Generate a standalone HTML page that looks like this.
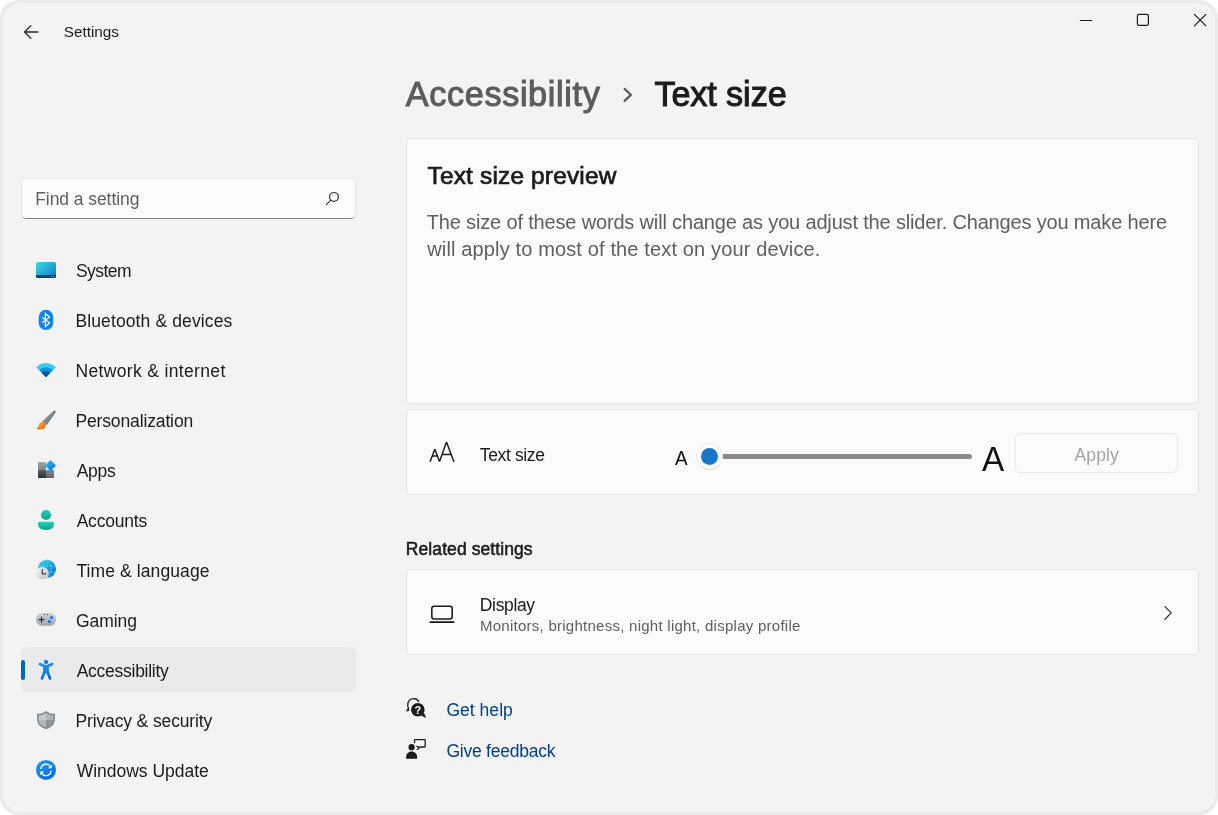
<!DOCTYPE html>
<html lang="en"><head><meta charset="utf-8"><title>Settings</title>
<style>
html,body{margin:0;padding:0;background:#fff;}
body{width:1218px;height:815px;overflow:hidden;position:relative;font-family:"Liberation Sans",sans-serif;}
.win{position:absolute;left:0;top:0;width:1218px;height:815px;border-radius:19px;background:#ebe9e9;}
.win i{position:absolute;display:block;left:3px;top:3px;right:3px;bottom:3px;border-radius:17.5px;background:#f3f3f3;}
.txt{position:absolute;left:0;top:0;width:1218px;height:815px;will-change:transform;}
.t{position:absolute;display:block;white-space:nowrap;line-height:1;margin:0;padding:0;font-weight:400;text-decoration:none;}
.card{position:absolute;left:406px;width:793px;box-sizing:border-box;background:#fbfbfb;border:1px solid #e5e5e5;border-radius:5px;}
.search{position:absolute;left:21px;top:178px;width:335px;height:41px;box-sizing:border-box;background:#fbfbfb;border:1px solid #e7e7e7;border-bottom:1px solid #868686;border-radius:5px;}
.sel{position:absolute;left:21px;top:647px;width:335px;height:45px;background:#eaeaea;border-radius:5px;}
.pill{position:absolute;left:21px;top:660px;width:4px;height:20px;border-radius:2px;background:#0067c0;}
.btn{position:absolute;left:1015px;top:433px;width:163px;height:40px;box-sizing:border-box;background:#fbfbfb;border:1px solid #e9e9e9;border-radius:5px;}
.track{position:absolute;left:709px;top:454px;width:263px;height:5px;border-radius:2.5px;background:#8a8a8a;}
.thumb{position:absolute;left:696px;top:443.3px;width:27px;height:27px;box-sizing:border-box;border-radius:50%;background:#fff;border:1px solid #eaeaea;border-bottom-color:#dedede;}
.thumb i{position:absolute;left:3.9px;top:3.8px;width:17.2px;height:17.2px;border-radius:50%;background:#1975c5;display:block;}
svg.ic{position:absolute;left:0;top:0;width:1218px;height:815px;overflow:visible;will-change:transform;}
</style></head>
<body>
<div class="win"><i></i></div>
<div class="search"></div>
<div class="sel"></div><div class="pill"></div>
<div class="card" style="top:138px;height:266px;"></div>
<div class="card" style="top:409px;height:86px;"></div>
<div class="card" style="top:569px;height:86px;"></div>
<div class="btn"></div>
<div class="track"></div>
<div class="thumb"><i></i></div>
<svg class="ic" viewBox="0 0 1218 815" width="1218" height="815">
<defs>
<linearGradient id="gSys" x1="0" y1="0" x2="1" y2="1"><stop offset="0" stop-color="#38e0e2"/><stop offset="1" stop-color="#1272c8"/></linearGradient>
<linearGradient id="gBrH" x1="0" y1="0" x2="1" y2="1"><stop offset="0" stop-color="#a3a9af"/><stop offset="1" stop-color="#5b636a"/></linearGradient>
<linearGradient id="gBrT" x1="0" y1="0" x2="1" y2="1"><stop offset="0" stop-color="#ffbe2e"/><stop offset="1" stop-color="#ee5a0c"/></linearGradient>
<linearGradient id="gDia" x1="0" y1="0" x2="1" y2="1"><stop offset="0" stop-color="#2fc0f8"/><stop offset="1" stop-color="#0a70da"/></linearGradient>
<linearGradient id="gAcc" x1="0" y1="0" x2="0" y2="1"><stop offset="0" stop-color="#27cfb8"/><stop offset="1" stop-color="#0ea48e"/></linearGradient>
<linearGradient id="gGlobe" x1="0" y1="0" x2="1" y2="1"><stop offset="0" stop-color="#2fd8e2"/><stop offset="1" stop-color="#0a5cc8"/></linearGradient>
<linearGradient id="gClock" x1="0" y1="0" x2="1" y2="1"><stop offset="0" stop-color="#fafafa"/><stop offset="1" stop-color="#bdbdbd"/></linearGradient>
<linearGradient id="gPad" x1="0" y1="0" x2="0" y2="1"><stop offset="0" stop-color="#cfd3d8"/><stop offset="1" stop-color="#9ea3aa"/></linearGradient>
<linearGradient id="gBlue" x1="0" y1="0" x2="0.6" y2="1"><stop offset="0" stop-color="#20a0ec"/><stop offset="1" stop-color="#0a6edb"/></linearGradient>
<linearGradient id="gAp1" x1="0" y1="0" x2="0" y2="1"><stop offset="0" stop-color="#a2a7ae"/><stop offset="1" stop-color="#80858c"/></linearGradient>
<linearGradient id="gAp2" x1="0" y1="0" x2="0" y2="1"><stop offset="0" stop-color="#5a5e63"/><stop offset="1" stop-color="#2d3034"/></linearGradient>
<linearGradient id="gAp3" x1="0" y1="0" x2="0" y2="1"><stop offset="0" stop-color="#868b92"/><stop offset="1" stop-color="#5f6368"/></linearGradient>
<clipPath id="cSys"><rect x="36" y="262" width="20" height="16" rx="1.8"/></clipPath>
<clipPath id="cSh"><path d="M46 712.9C48.3 714.6 50.8 715.3 53.4 715.4V719.6C53.4 723.6 50.2 726 46 727.5C41.800 726 38.600 723.600 38.600 719.600V715.400C41.200 715.300 43.700 714.600 46 712.900Z"/></clipPath>
</defs>
<!-- title bar -->
<g fill="none" stroke="#2b2b2b" stroke-width="1.3" stroke-linecap="round" stroke-linejoin="round">
<path d="M37.900 32H24.700M30.800 25.800L24.500 32L30.800 38.200"/>
</g>
<g fill="none" stroke="#1b1b1b" stroke-width="1.2" stroke-linecap="round">
<path d="M1080.300 20.500H1091.800"/>
<rect x="1137.400" y="14.400" width="11" height="11" rx="1.700"/>
<path d="M1194.400 14.400L1205.900 25.900M1205.900 14.400L1194.400 25.900"/>
</g>
<!-- search icon -->
<g fill="none" stroke="#333" stroke-width="1.2" stroke-linecap="round">
<circle cx="334" cy="196.900" r="4.400"/><path d="M330.800 200.100L326.300 204.600"/>
</g>
<!-- system -->
<g clip-path="url(#cSys)"><rect x="36" y="262" width="20" height="16" fill="url(#gSys)"/><rect x="36" y="275" width="20" height="3" fill="#08436c"/><rect x="51" y="276" width="1" height="1" fill="#9fd2e6" fill-opacity="0.800"/><rect x="53" y="276" width="1" height="1" fill="#9fd2e6" fill-opacity="0.800"/></g>
<!-- bluetooth -->
<rect x="38.700" y="309.800" width="14.500" height="20.200" rx="7.250" fill="#0b84ee"/>
<path d="M42 317.200L49.500 322.800L45.400 326.600V313.400L49.500 317.200L42 322.800" fill="none" stroke="#fff" stroke-width="1.200" stroke-linejoin="miter"/>
<!-- wifi -->
<path d="M46 377L36.300 367.300A13.750 13.750 0 0 1 55.700 367.300Z" fill="#3ccaf5" stroke="#3ccaf5" stroke-width="0.500" stroke-linejoin="round"/>
<path d="M46 377L39.100 370.100A9.750 9.750 0 0 1 52.900 370.100Z" fill="#1490df"/>
<path d="M46 377L41.900 372.900A5.800 5.800 0 0 1 50.100 372.900Z" fill="#0c59a4" stroke="#0c59a4" stroke-width="0.500" stroke-linejoin="round"/>
<!-- brush -->
<path d="M53.400 410.900C54.400 409.700 56.400 411 55.700 412.400L46.600 425.200L42 421.600Z" fill="url(#gBrH)"/>
<path d="M41.600 421.900C43.800 421.300 46.300 423.300 45.700 426C45 429.200 40 430.100 36.100 428.700C38.400 427.600 38.800 426.200 39 424.600C39.200 423.100 40.200 422.300 41.600 421.900Z" fill="url(#gBrT)"/>
<!-- apps -->
<rect x="38" y="462" width="8" height="8" rx="0.600" fill="url(#gAp1)"/>
<rect x="38" y="470" width="8" height="8" rx="0.600" fill="url(#gAp2)"/>
<rect x="46" y="470" width="8" height="8" rx="0.600" fill="url(#gAp3)"/>
<path d="M50.500 460.300L55.800 465.600L50.500 470.900L45.200 465.600Z" fill="url(#gDia)" stroke="url(#gDia)" stroke-width="0.500" stroke-linejoin="round"/>
<!-- accounts -->
<circle cx="46" cy="515" r="5.050" fill="url(#gAcc)"/>
<path d="M39.600 521.800H52.400Q54.100 521.800 54.100 523.500C54.100 528 50.500 530 46 530C41.500 530 37.900 528 37.900 523.500Q37.900 521.800 39.600 521.800Z" fill="url(#gAcc)"/>
<!-- time & language -->
<circle cx="46.900" cy="568.900" r="9.100" fill="url(#gGlobe)"/>
<g fill="none" stroke="#4fe3ee" stroke-opacity="0.750" stroke-width="0.800">
<path d="M38.300 566H55.500M38.300 572H55.500M46.900 559.800V578"/><ellipse cx="46.900" cy="568.900" rx="4.300" ry="9.100"/>
</g>
<circle cx="42.200" cy="573.500" r="6.500" fill="#f3f3f3"/>
<circle cx="42.200" cy="573.500" r="6.100" fill="url(#gClock)"/>
<path d="M42.300 569.600V573.900H45.700" fill="none" stroke="#454545" stroke-width="1.300" stroke-linecap="round" stroke-linejoin="round"/>
<!-- gaming -->
<rect x="36" y="613" width="20" height="12.800" rx="6.400" fill="url(#gPad)"/>
<path d="M41.500 617.100V622.100M39 619.600H44" fill="none" stroke="#2e2e2e" stroke-width="1.200" stroke-linecap="round"/>
<circle cx="51.500" cy="617.500" r="1.600" fill="#0f7fe0"/><circle cx="49.400" cy="621.500" r="1.600" fill="#0f7fe0"/>
<circle cx="44.400" cy="614.600" r="0.550" fill="#333"/><circle cx="47.500" cy="614.600" r="0.550" fill="#333"/>
<!-- accessibility -->
<g fill="url(#gBlue)" stroke="none">
<circle cx="46" cy="661.900" r="2.150"/>
<path d="M38.600 663.400C39 662.700 39.700 662.500 40.300 662.800L44.200 664.600C45.300 665.100 46.700 665.100 47.800 664.600L51.700 662.800C52.300 662.500 53 662.700 53.400 663.400C53.700 664.100 53.400 664.900 52.700 665.200L48.900 667V671.500L51.300 678C51.600 678.800 51.200 679.500 50.500 679.800C49.800 680 49.100 679.700 48.800 679L46.300 672.900H45.700L43.200 679C42.900 679.700 42.200 680 41.500 679.800C40.800 679.500 40.400 678.800 40.700 678L43.100 671.500V667L39.300 665.200C38.600 664.900 38.300 664.100 38.600 663.400Z"/>
</g>
<!-- privacy -->
<path d="M46 711C48.800 713.100 51.800 713.800 55 713.800V719.600C55 724.800 51 727.700 46 729.300C41 727.700 37 724.800 37 719.600V713.800C40.200 713.800 43.200 713.100 46 711Z" fill="#8a8e94"/>
<g clip-path="url(#cSh)"><rect x="37" y="711" width="9" height="9" fill="#c6c9cd"/><rect x="46" y="711" width="9" height="9" fill="#b1b4b9"/><rect x="37" y="720" width="9" height="10" fill="#b1b4b9"/><rect x="46" y="720" width="9" height="10" fill="#8f9399"/></g>
<!-- update -->
<circle cx="46" cy="769.900" r="10" fill="url(#gBlue)"/>
<g fill="none" stroke="#fff" stroke-width="1.300" stroke-linecap="round">
<path d="M40.900 768.600A5.300 5.300 0 0 1 50.600 766.600"/><path d="M51.100 771.200A5.300 5.300 0 0 1 41.400 773.200"/>
</g>
<path d="M51.700 764.600V768.300H48Z" fill="#fff"/><path d="M40.300 775.200V771.500H44Z" fill="#fff"/>
<!-- heading chevron -->
<path d="M624.600 88.900L630.900 94.900L624.600 100.900" fill="none" stroke="#5c5c5c" stroke-width="2.200" stroke-linecap="round" stroke-linejoin="round"/>
<!-- AA icon -->
<path d="M430 461.800L434.900 449.300L439.550 461.500L446.500 442L453.900 461.800M432.200 456H437.500M442.200 454.500H451.200" fill="none" stroke="#1b1b1b" stroke-width="1.450" stroke-linejoin="bevel"/>
<!-- display icon -->
<g fill="none" stroke="#1b1b1b" stroke-width="1.550" stroke-linecap="round">
<rect x="431.800" y="606.200" width="20.400" height="12.800" rx="2.400"/><path d="M430.200 622.100H453.800"/>
</g>
<!-- card chevron -->
<path d="M1164.900 606.600L1171.300 612.900L1164.900 619.300" fill="none" stroke="#3a3a3a" stroke-width="1.300" stroke-linecap="round" stroke-linejoin="round"/>
<!-- get help -->
<circle cx="417.800" cy="709.800" r="6.800" fill="#1b1b1b"/>
<path d="M421 715.500L426.200 717.900L423.900 712.600Z" fill="#1b1b1b"/>
<path d="M418.700 701.500C416.600 697.400 409.600 697.300 407.900 703C407.300 705.400 407.900 707.300 408.700 709.300" fill="none" stroke="#1b1b1b" stroke-width="1.300" stroke-linecap="round"/>
<path d="M406 711.800L407.500 708.300L409.700 710.500Z" fill="#1b1b1b"/>
<text x="417.800" y="714.100" font-family="Liberation Sans, sans-serif" font-size="11" font-weight="700" fill="#fff" text-anchor="middle">?</text>
<!-- feedback -->
<circle cx="411.600" cy="747.200" r="3.100" fill="#1b1b1b"/>
<path d="M406.100 758.800V757C406.100 753.600 408.500 751.400 411.600 751.400C414.700 751.400 417.100 753.600 417.100 757V758.800Z" fill="#1b1b1b"/>
<path d="M414.500 742.500V740.400Q414.500 739.700 415.200 739.700H424.500Q425.200 739.700 425.200 740.400V746.300Q425.200 747 424.500 747H420L417.300 749.600M416.800 746.400L419.300 747.300" fill="none" stroke="#1b1b1b" stroke-width="1.300" stroke-linecap="round" stroke-linejoin="round"/>
</svg>

<div class="txt">
<div class="t" id="t_settings" style="left:63.85px;top:24.00px;font-size:15.30px;color:#1b1b1b;letter-spacing:-0.023px;">Settings</div>
<div class="t" id="t_find" style="left:35.20px;top:191.00px;font-size:17.50px;color:#5f5f5f;letter-spacing:-0.065px;">Find a setting</div>
<a class="t" id="t_h1" style="left:405.85px;top:77.00px;font-size:34.20px;color:#5c5c5c;letter-spacing:0.642px;-webkit-text-stroke:1.03px #5c5c5c;">Accessibility</a>
<h1 class="t" id="t_h2" style="left:654.40px;top:77.00px;font-size:34.20px;color:#1b1b1b;letter-spacing:-0.093px;-webkit-text-stroke:1.03px #1b1b1b;">Text size</h1>
<h2 class="t" id="t_prev" style="left:427.55px;top:164.00px;font-size:24.40px;color:#1b1b1b;letter-spacing:0.189px;-webkit-text-stroke:0.73px #1b1b1b;">Text size preview</h2>
<p class="t" id="t_p1" style="left:426.75px;top:212.00px;font-size:20.00px;color:#5f5f5f;letter-spacing:-0.164px;">The size of these words will change as you adjust the slider. Changes you make here</p>
<p class="t" id="t_p2" style="left:427.25px;top:239.00px;font-size:20.00px;color:#5f5f5f;letter-spacing:0.140px;">will apply to most of the text on your device.</p>
<div class="t" id="t_ts" style="left:479.85px;top:447.00px;font-size:17.50px;color:#1b1b1b;letter-spacing:-0.379px;">Text size</div>
<div class="t" id="t_a1" style="left:674.70px;top:448.00px;font-size:20.00px;color:#111111;letter-spacing:0.000px;transform:scaleX(0.9440);transform-origin:0 0;">A</div>
<div class="t" id="t_a2" style="left:981.80px;top:441.00px;font-size:35.00px;color:#111111;letter-spacing:0.000px;transform:scaleX(0.9533);transform-origin:0 0;">A</div>
<div class="t" id="t_apply" style="left:1074.55px;top:447.00px;font-size:17.50px;color:#a3a3a3;letter-spacing:0.087px;">Apply</div>
<h2 class="t" id="t_rel" style="left:405.80px;top:541.00px;font-size:17.50px;color:#1b1b1b;letter-spacing:0.088px;-webkit-text-stroke:0.53px #1b1b1b;">Related settings</h2>
<div class="t" id="t_disp" style="left:479.85px;top:597.00px;font-size:17.50px;color:#1b1b1b;letter-spacing:-0.361px;">Display</div>
<div class="t" id="t_mon" style="left:479.95px;top:618.00px;font-size:15.00px;color:#5f5f5f;letter-spacing:0.260px;">Monitors, brightness, night light, display profile</div>
<a class="t" id="t_help" style="left:446.45px;top:702.00px;font-size:17.50px;color:#003e92;letter-spacing:0.027px;">Get help</a>
<a class="t" id="t_fb" style="left:446.45px;top:743.00px;font-size:17.50px;color:#003e92;letter-spacing:-0.239px;">Give feedback</a>
<a class="t" id="t_nav0" style="left:75.90px;top:263.00px;font-size:17.50px;color:#1b1b1b;letter-spacing:-0.534px;">System</a>
<a class="t" id="t_nav1" style="left:75.40px;top:313.00px;font-size:17.50px;color:#1b1b1b;letter-spacing:0.122px;">Bluetooth &amp; devices</a>
<a class="t" id="t_nav2" style="left:75.40px;top:363.00px;font-size:17.50px;color:#1b1b1b;letter-spacing:0.349px;">Network &amp; internet</a>
<a class="t" id="t_nav3" style="left:75.40px;top:413.00px;font-size:17.50px;color:#1b1b1b;letter-spacing:-0.131px;">Personalization</a>
<a class="t" id="t_nav4" style="left:76.65px;top:463.00px;font-size:17.50px;color:#1b1b1b;letter-spacing:-0.253px;">Apps</a>
<a class="t" id="t_nav5" style="left:76.65px;top:513.00px;font-size:17.50px;color:#1b1b1b;letter-spacing:-0.205px;">Accounts</a>
<a class="t" id="t_nav6" style="left:76.40px;top:563.00px;font-size:17.50px;color:#1b1b1b;letter-spacing:0.102px;">Time &amp; language</a>
<a class="t" id="t_nav7" style="left:75.90px;top:613.00px;font-size:17.50px;color:#1b1b1b;letter-spacing:-0.044px;">Gaming</a>
<a class="t" id="t_nav8" style="left:76.65px;top:663.00px;font-size:17.50px;color:#1b1b1b;letter-spacing:-0.258px;">Accessibility</a>
<a class="t" id="t_nav9" style="left:75.40px;top:713.00px;font-size:17.50px;color:#1b1b1b;letter-spacing:-0.126px;">Privacy &amp; security</a>
<a class="t" id="t_nav10" style="left:76.65px;top:763.00px;font-size:17.50px;color:#1b1b1b;letter-spacing:-0.013px;">Windows Update</a>
</div>
</body></html>
